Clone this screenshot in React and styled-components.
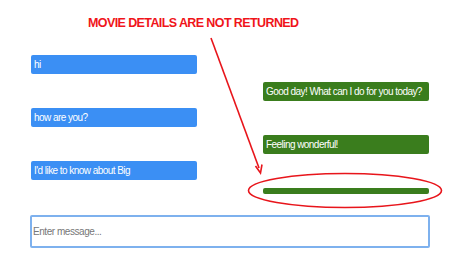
import React from "react";
import styled, { createGlobalStyle } from "styled-components";

const GlobalStyle = createGlobalStyle`
  html, body {
    margin: 0;
    background: #fff;
  }
  body {
    font-family: "Liberation Sans", Arial, sans-serif;
  }
`;

const Page = styled.div`
  position: relative;
  width: 474px;
  height: 271px;
  overflow: hidden;
  background: #fff;
`;

const Chat = styled.section`
  display: flex;
  flex-direction: column;
  padding: 55px 0 0 30px;
  width: 400px;
`;

const Messages = styled.div`
  display: flex;
  flex-direction: column;
  gap: 7.6px;
  padding: 0 1px;
`;

const Row = styled.div`
  display: flex;
  justify-content: ${(p) => (p.$bot ? "flex-end" : "flex-start")};
`;

const Bubble = styled.div`
  box-sizing: border-box;
  width: 166px;
  padding: 3px 3px;
  border-radius: 2px;
  font-size: 10px;
  letter-spacing: -0.55px;
  line-height: 13px;
  white-space: nowrap;
  color: #fff;
  background: ${(p) => (p.$bot ? "#3a7d1d" : "#3b8ff4")};
  height: ${(p) => (p.$empty ? "6px" : "19px")};
`;

const Input = styled.input`
  box-sizing: border-box;
  margin-top: 21px;
  width: 400px;
  height: 33px;
  padding: 0 1px;
  border: 2px solid #7eb1ee;
  border-radius: 2px;
  outline: none;
  font-family: inherit;
  font-size: 10px;
  letter-spacing: -0.45px;
  color: #333;
  &::placeholder {
    color: #777;
  }
`;

const Heading = styled.div`
  position: absolute;
  left: 88px;
  top: 16px;
  font-size: 12.5px;
  letter-spacing: -0.6px;
  font-weight: bold;
  color: #f0141a;
  white-space: nowrap;
`;

const Overlay = styled.svg`
  position: absolute;
  left: 0;
  top: 0;
  pointer-events: none;
`;

const messages = [
  { bot: false, text: "hi" },
  { bot: true, text: "Good day! What can I do for you today?" },
  { bot: false, text: "how are you?" },
  { bot: true, text: "Feeling wonderful!" },
  { bot: false, text: "I'd like to know about Big" },
  { bot: true, text: "" },
];

const App = () => (
  <Page>
    <GlobalStyle />
    <Chat>
      <Messages>
        {messages.map((m, i) => (
          <Row key={i} $bot={m.bot}>
            <Bubble $bot={m.bot} $empty={!m.text}>
              {m.text}
            </Bubble>
          </Row>
        ))}
      </Messages>
      <Input placeholder="Enter message..." />
    </Chat>
    <Heading>MOVIE DETAILS ARE NOT RETURNED</Heading>
    <Overlay width="474" height="271" viewBox="0 0 474 271">
      <line x1="211" y1="38" x2="259" y2="168" stroke="#e8151b" strokeWidth="1.6" />
      <path d="M255.5 166 L260.5 173 L262 164.5" fill="none" stroke="#e8151b" strokeWidth="1.6" />
      <ellipse cx="345" cy="190.5" rx="96.5" ry="17" fill="none" stroke="#e8151b" strokeWidth="1.6" />
    </Overlay>
  </Page>
);

export default App;
